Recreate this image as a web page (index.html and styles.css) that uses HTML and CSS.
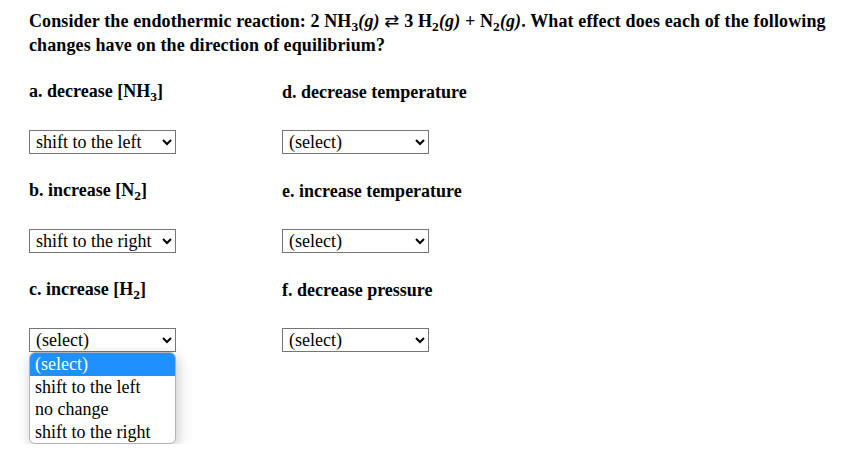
FILE: index.html
```html
<!DOCTYPE html>
<html>
<head>
<meta charset="utf-8">
<link rel="stylesheet" href="styles.css">
</head>
<body>
<div class="page">
  <p class="question">Consider the endothermic reaction: 2 NH<sub>3</sub><i>(g)</i> <span class="arrow">⇄</span> 3 H<sub>2</sub><i>(g)</i> + N<sub>2</sub><i>(g)</i>. What effect does each of the following changes have on the direction of equilibrium?</p>
  <div class="grid">
    <div class="item">
      <div class="label"><span>a. decrease [NH<sub>3</sub>]</span></div>
      <div class="field">
        <select class="sel"><option>(select)</option><option selected>shift to the left</option><option>no change</option><option>shift to the right</option></select>
      </div>
    </div>
    <div class="item">
      <div class="label"><span>d. decrease temperature</span></div>
      <div class="field">
        <select class="sel"><option>(select)</option><option>shift to the left</option><option>no change</option><option>shift to the right</option></select>
      </div>
    </div>
    <div class="item">
      <div class="label"><span>b. increase [N<sub>2</sub>]</span></div>
      <div class="field">
        <select class="sel"><option>(select)</option><option>shift to the left</option><option>no change</option><option selected>shift to the right</option></select>
      </div>
    </div>
    <div class="item">
      <div class="label"><span>e. increase temperature</span></div>
      <div class="field">
        <select class="sel"><option>(select)</option><option>shift to the left</option><option>no change</option><option>shift to the right</option></select>
      </div>
    </div>
    <div class="item">
      <div class="label"><span>c. increase [H<sub>2</sub>]</span></div>
      <div class="field">
        <select class="sel"><option>(select)</option><option>shift to the left</option><option>no change</option><option>shift to the right</option></select>
      </div>
      <div class="popup">
        <div class="opt active">(select)</div>
        <div class="opt">shift to the left</div>
        <div class="opt">no change</div>
        <div class="opt">shift to the right</div>
      </div>
    </div>
    <div class="item">
      <div class="label"><span>f. decrease pressure</span></div>
      <div class="field">
        <select class="sel"><option>(select)</option><option>shift to the left</option><option>no change</option><option>shift to the right</option></select>
      </div>
    </div>
  </div>
</div>
</body>
</html>
```

FILE: styles.css
```css
html, body {
  margin: 0;
  padding: 0;
  background: #fff;
}
body {
  font-family: "Times New Roman", "Liberation Serif", serif;
  color: #000;
}
.page {
  padding: 9px 8px 0 29px;
}
.question {
  margin: 0;
  font-weight: bold;
  font-size: 18px;
  line-height: 24px;
  letter-spacing: 0.12px;
}
sub {
  font-size: 0.75em;
  line-height: 1;
  vertical-align: -0.3em;
}
.question sub {
  line-height: 0;
}
.arrow {
  font-family: "DejaVu Sans", sans-serif;
  font-weight: normal;
  font-size: 18px;
  line-height: 0;
}
.grid {
  display: grid;
  grid-template-columns: 253px auto;
  margin-top: 24px;
  row-gap: 26px;
}
.item {
  display: flex;
  flex-direction: column;
  align-items: flex-start;
}
.label {
  display: flex;
  align-items: center;
  height: 22px;
  font-weight: bold;
  font-size: 18px;
  line-height: 22px;
}
.field {
  margin-top: 27px;
}
.sel {
  display: block;
  width: 147px;
  height: 24px;
  margin: 0;
  font-family: "Times New Roman", "Liberation Serif", serif;
  font-size: 18px;
  color: #000;
  background: #fff;
  border: 1px solid #767676;
  border-radius: 0;
  padding: 0 2px;
}
.popup {
  width: 145px;
  margin: 0;
  border: 1px solid #b4b4b4;
  border-radius: 6px;
  background: #fff;
  box-shadow: 2px 4px 14px rgba(0,0,0,0.22);
  overflow: hidden;
  font-size: 18px;
}
.opt {
  height: 22.5px;
  line-height: 22px;
  padding: 0 5px;
  white-space: nowrap;
}
.opt.active {
  background: #1e90ff;
  color: #fff;
}
```
